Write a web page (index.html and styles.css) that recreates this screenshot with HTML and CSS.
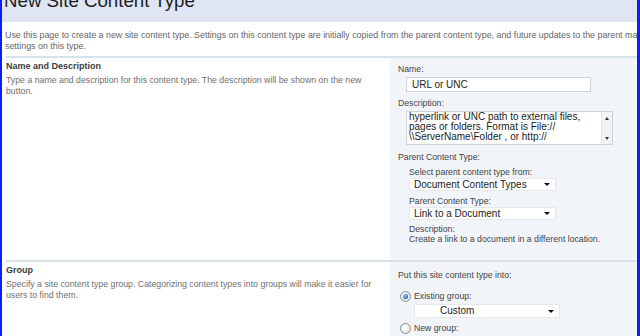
FILE: index.html
```html
<!DOCTYPE html>
<html>
<head>
<meta charset="utf-8">
<link rel="stylesheet" href="styles.css">
</head>
<body>
<div class="frame">
  <div class="titlebar"><h1>New Site Content Type</h1></div>
  <div class="page">
    <p class="intro"><span class="ln">Use this page to create a new site content type. Settings on this content type are initially copied from the parent content type, and future updates to the parent may overwrite</span>settings on this type.</p>

    <section class="sec">
      <div class="left">
        <h2>Name and Description</h2>
        <p>Type a name and description for this content type. The description will be shown on the new button.</p>
      </div>
      <div class="right">
        <div class="lbl">Name:</div>
        <div class="input">URL or UNC</div>
        <div class="lbl gap6">Description:</div>
        <div class="textarea">
          <div class="ta-text">hyperlink or UNC path to external files, pages or folders. Format is File:// \\ServerName\Folder , or http://</div>
          <div class="scroll"><span class="up"></span><span class="down"></span></div>
        </div>
        <div class="lbl gap7">Parent Content Type:</div>
        <div class="indent">
          <div class="lbl gap5">Select parent content type from:</div>
          <div class="select">Document Content Types<span class="arrow"></span></div>
          <div class="lbl gap5">Parent Content Type:</div>
          <div class="select">Link to a Document<span class="arrow"></span></div>
          <div class="lbl gap4">Description:</div>
          <div class="lbl">Create a link to a document in a different location.</div>
        </div>
      </div>
    </section>

    <section class="sec">
      <div class="left">
        <h2>Group</h2>
        <p>Specify a site content type group. Categorizing content types into groups will make it easier for users to find them.</p>
      </div>
      <div class="right">
        <div class="lbl gap2">Put this site content type into:</div>
        <div class="radio-row first"><span class="radio checked"></span>Existing group:</div>
        <div class="select group"><span class="custom">Custom</span><span class="arrow"></span></div>
        <div class="radio-row"><span class="radio"></span>New group:</div>
      </div>
    </section>
  </div>
</div>
</body>
</html>
```

FILE: styles.css
```css
* { box-sizing: border-box; }
html, body { margin: 0; padding: 0; background: #fff; }
body { font-family: "Liberation Sans", Arial, sans-serif; }

.frame {
  width: 640px;
  height: 336px;
  overflow: hidden;
  border-left: 2px solid #0b1ff2;
  border-right: 3px solid #0b1ff2;
}

.titlebar {
  height: 22px;
  background: #dfe5f2;
  overflow: hidden;
  padding-left: 2px;
}
.titlebar h1 {
  margin: -9px 0 0;
  font-size: 18.7px;
  line-height: 20px;
  font-weight: normal;
  color: #1e1e1e;
  white-space: nowrap;
}

.page { padding-left: 4px; }

.intro {
  margin: 8px 0 4px -1px;
  font-size: 8.87px;
  line-height: 11px;
  color: #666;
}
.intro .ln { display: block; white-space: nowrap; }

.sec {
  border-top: 2px solid #d5e2e9;
  display: grid;
  grid-template-columns: 384px 1fr;
}

.left { padding: 3px 10px 0 0; }
.left h2 {
  margin: 0;
  font-size: 9px;
  line-height: 11px;
  font-weight: bold;
  color: #3c3c3c;
}
.left p {
  margin: 3px 0 0;
  font-size: 8.75px;
  line-height: 11px;
  color: #707070;
}

.right {
  background: #f1f5f9;
  padding: 6px 0 16px 8px;
  font-size: 8.7px;
  line-height: 10px;
  color: #444;
}

.lbl { white-space: nowrap; }
.gap2 { margin-top: 2px; }
.gap4 { margin-top: 4px; }
.gap5 { margin-top: 5px; }
.gap6 { margin-top: 6px; }
.gap7 { margin-top: 7px; }

.input {
  margin: 3px 0 0 8px;
  width: 185px;
  height: 15px;
  background: #fff;
  border: 1px solid #cfd3d6;
  padding-left: 5px;
  font-size: 10px;
  line-height: 13px;
  color: #1c1c1c;
}

.textarea {
  margin: 3px 0 0 8px;
  width: 207px;
  height: 34px;
  background: #fff;
  border: 1px solid #cfd3d6;
  display: flex;
  overflow: hidden;
}
.ta-text {
  flex: 1;
  padding: 0 2px 0 2px;
  font-size: 10px;
  line-height: 10px;
  color: #1c1c1c;
  white-space: normal;
}
.scroll {
  width: 11px;
  background: #f3f3f3;
  border-left: 1px solid #e4e4e4;
  display: flex;
  flex-direction: column;
  justify-content: space-between;
  align-items: center;
  padding: 5px 0 4px;
}
.scroll .up {
  width: 0; height: 0;
  border-left: 2.5px solid transparent;
  border-right: 2.5px solid transparent;
  border-bottom: 3px solid #333;
}
.scroll .down {
  width: 0; height: 0;
  border-left: 2.5px solid transparent;
  border-right: 2.5px solid transparent;
  border-top: 3px solid #333;
}

.indent { margin-left: 11px; }

.select {
  margin-top: 1px;
  width: 147px;
  height: 13px;
  background: #fff;
  border: 1px solid #e6e8ea;
  display: flex;
  align-items: center;
  padding-left: 4px;
  font-size: 10px;
  color: #1c1c1c;
}
.arrow {
  margin-left: auto;
  margin-right: 5px;
  width: 0; height: 0;
  border-left: 3px solid transparent;
  border-right: 3px solid transparent;
  border-top: 3px solid #111;
}

.select.group {
  margin: 2px 0 0 16px;
  height: 14px;
  width: 146px;
}
.custom { padding-left: 21px; }

.radio-row {
  display: flex;
  align-items: center;
  height: 12px;
  margin-top: 4px;
  white-space: nowrap;
}
.radio-row.first { margin-top: 10px; }

.radio {
  width: 11px;
  height: 11px;
  border-radius: 50%;
  border: 1px solid #8c8f92;
  background: radial-gradient(circle at 40% 35%, #ffffff 0%, #e9eaea 60%, #cfd1d3 100%);
  margin: 0 3px 0 2px;
  display: flex;
  align-items: center;
  justify-content: center;
}
.radio.checked::after {
  content: "";
  width: 5px;
  height: 5px;
  border-radius: 50%;
  background: radial-gradient(circle at 40% 35%, #9fd3ff 0%, #2b6fd0 60%, #173f8a 100%);
}
```
